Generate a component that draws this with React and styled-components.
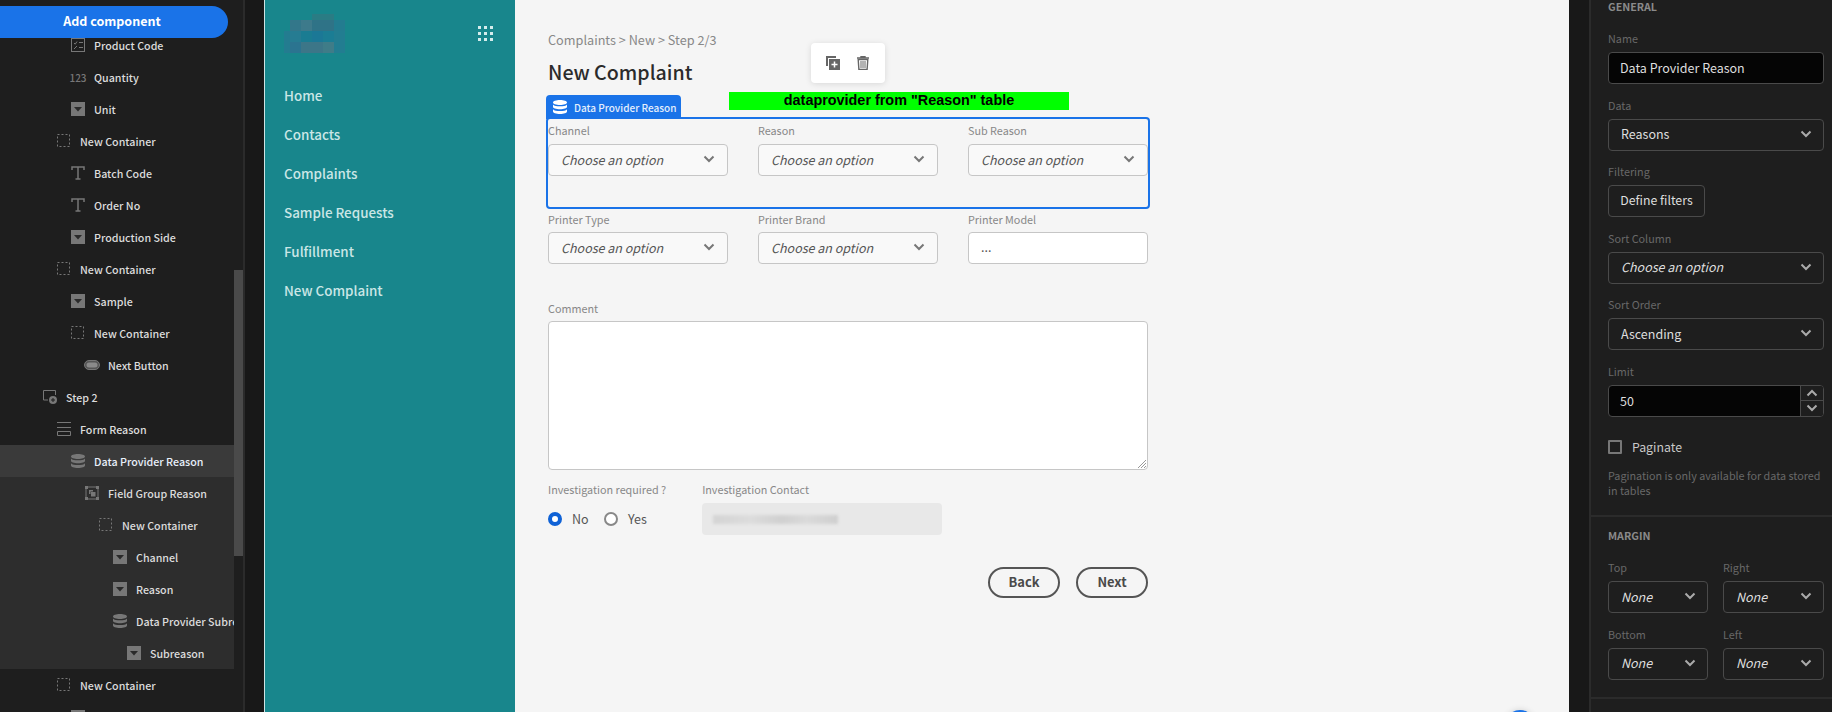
import styled, { createGlobalStyle } from "styled-components";

const FONT = `"Noto Sans CJK SC", "Noto Sans", sans-serif`;

const tree = [
  { name: "Product Code", level: 2, icon: "options" },
  { name: "Quantity", level: 2, icon: "number" },
  { name: "Unit", level: 2, icon: "dropdown" },
  { name: "New Container", level: 1, icon: "container" },
  { name: "Batch Code", level: 2, icon: "text" },
  { name: "Order No", level: 2, icon: "text" },
  { name: "Production Side", level: 2, icon: "dropdown" },
  { name: "New Container", level: 1, icon: "container" },
  { name: "Sample", level: 2, icon: "dropdown" },
  { name: "New Container", level: 2, icon: "container" },
  { name: "Next Button", level: 3, icon: "button" },
  { name: "Step 2", level: 0, icon: "step" },
  { name: "Form Reason", level: 1, icon: "form" },
  { name: "Data Provider Reason", level: 2, icon: "data", state: "selected" },
  { name: "Field Group Reason", level: 3, icon: "group", state: "child" },
  { name: "New Container", level: 4, icon: "container", state: "child" },
  { name: "Channel", level: 5, icon: "dropdown", state: "child" },
  { name: "Reason", level: 5, icon: "dropdown", state: "child" },
  { name: "Data Provider Subreason", level: 5, icon: "data", state: "child" },
  { name: "Subreason", level: 6, icon: "dropdown", state: "child" },
  { name: "New Container", level: 1, icon: "container" },
  { name: "Sample", level: 2, icon: "dropdown" },
];

const navItems = ["Home", "Contacts", "Complaints", "Sample Requests", "Fulfillment", "New Complaint"];

const DB_PATH =
  "M0 2.500C0 1 3 0 7 0s7 1 7 2.500S11 5 7 5 0 4 0 2.500zM0 4.500C1 6 4 6.300 7 6.300s6-.3 7-1.800V7c0 1.200-3 2.200-7 2.200S0 8.200 0 7zM0 9.200c1 1.500 4 1.800 7 1.800s6-.3 7-1.800v2.300C14 13 11 14 7 14s-7-1-7-2.500z";

// blurred logo blocks from the reference: x, y, w, h, colour
const logoBlocks = [
  [28, 0, 22, 6, "#2a7c84"],
  [6, 6, 11, 11, "#33778a"],
  [17, 6, 11, 11, "#3d7a8b"],
  [28, 6, 22, 11, "#2f7387"],
  [50, 6, 11, 11, "#237c90"],
  [0, 17, 6, 11, "#237c90"],
  [6, 17, 11, 11, "#267c92"],
  [17, 17, 11, 11, "#1a7c92"],
  [28, 17, 11, 11, "#1b7896"],
  [39, 17, 11, 11, "#1b7d94"],
  [50, 17, 11, 11, "#227d91"],
  [0, 28, 6, 11, "#237c90"],
  [6, 28, 11, 11, "#2b7490"],
  [17, 28, 22, 11, "#3c7688"],
  [39, 28, 11, 11, "#3f7c88"],
  [50, 28, 11, 11, "#227d91"],
];

function TreeIcon({ kind }) {
  const c = "#777";
  if (kind === "number") return <NumberGlyph>123</NumberGlyph>;
  if (kind === "button") {
    return (
      <svg width="16" height="10" viewBox="0 0 16 10" fill="none" style={{ flexShrink: 0 }}>
        <rect x=".5" y=".5" width="15" height="9" rx="4.500" fill="#555" stroke="#777" />
        <rect x="2.500" y="2.500" width="11" height="5" rx="2.500" fill="#8a8a8a" />
      </svg>
    );
  }
  return (
    <svg width="14" height="14" viewBox="0 0 14 14" fill="none">
      {kind === "dropdown" && (
        <>
          <rect width="14" height="14" fill={c} />
          <path d="M3 5h8l-4 4.500z" fill="#2a2a2a" />
        </>
      )}
      {kind === "container" && (
        <rect x=".5" y=".5" width="12" height="12" stroke={c} strokeDasharray="2 2" />
      )}
      {kind === "text" && (
        <path d="M1 4V1h12v3M7 1v12M4.500 13h5" stroke={c} strokeWidth="1.500" />
      )}
      {kind === "options" && (
        <>
          <rect x=".5" y=".5" width="13" height="13" stroke={c} />
          <path d="M3 5l1.200 1.200L6 3.500M3 11l3-3M8 4.500h4M8 9.500h4" stroke={c} />
        </>
      )}
      {kind === "form" && (
        <path d="M0 .5h14M0 5.500h14M.5 9.500h13v4H.5z" stroke={c} />
      )}
      {kind === "data" && <path d={DB_PATH} fill={c} />}
      {kind === "group" && (
        <>
          <rect x="1" y="1" width="12" height="12" stroke={c} />
          <path d="M0 0h3v3H0zM11 0h3v3h-3zM0 11h3v3H0zM11 11h3v3h-3z" fill={c} />
          <path d="M4 4h4v1.500H5.500V8H4z" fill={c} />
          <rect x="6" y="6" width="4.500" height="4.500" fill={c} />
        </>
      )}
      {kind === "step" && (
        <>
          <path d="M5 10H.5V.5h12V5" stroke={c} />
          <circle cx="10" cy="10" r="4" fill={c} />
          <path d="M8 10h4M10 8v4" stroke="#1e1e1e" />
        </>
      )}
    </svg>
  );
}

function Chevron({ color = "#777", up }) {
  return (
    <svg width="12" height="8" viewBox="0 0 12 8" fill="none">
      <path d={up ? "M1.500 6.500L6 2l4.500 4.500" : "M1.500 1.500L6 6l4.500-4.500"} stroke={color} strokeWidth="2" />
    </svg>
  );
}

function FormSelect() {
  return (
    <LightSelect>
      <span>Choose an option</span>
      <Chevron />
    </LightSelect>
  );
}

function DarkDropdown({ children, italic }) {
  return (
    <DarkSelect $italic={italic}>
      <span>{children}</span>
      <Chevron color="#aaa" />
    </DarkSelect>
  );
}

export default function App() {
  return (
    <>
      <GlobalStyle />
      <Page>
        <TreePanel>
          <AddButton>Add component</AddButton>
          <TreeList>
            {tree.map((row, i) => (
              <TreeRow key={i} $level={row.level} $state={row.state}>
                <IconSlot>
                  <TreeIcon kind={row.icon} />
                </IconSlot>
                <span>{row.name}</span>
              </TreeRow>
            ))}
          </TreeList>
          <ScrollTrack>
            <ScrollThumb />
          </ScrollTrack>
        </TreePanel>
        <Gutter $line />
        <Sidebar>
          <SidebarHead>
            <svg width="61" height="39" viewBox="0 0 61 39">
              {logoBlocks.map(([x, y, w, h, fill], i) => (
                <rect key={i} x={x} y={y} width={w} height={h} fill={fill} />
              ))}
            </svg>
            <svg width="15" height="15" viewBox="0 0 15 15" fill="#d5ecec">
              {[0, 6, 12].flatMap((y) =>
                [0, 6, 12].map((x) => <rect key={`${x}-${y}`} x={x} y={y} width="3" height="3" />)
              )}
            </svg>
          </SidebarHead>
          <Nav>
            {navItems.map((item) => (
              <NavItem key={item}>{item}</NavItem>
            ))}
          </Nav>
        </Sidebar>
        <Main>
          <Breadcrumb>Complaints &gt; New &gt; Step 2/3</Breadcrumb>
          <TitleRow>
            <Title>New Complaint</Title>
            <Toolbar>
              <svg width="14" height="14" viewBox="0 0 14 14">
                <path d="M0 0h10v2H2v8H0z" fill="#666" />
                <path d="M3 3h11v11H3z" fill="#666" />
                <path d="M5.500 8.500h6M8.500 5.500v6" stroke="#fff" strokeWidth="1.500" />
              </svg>
              <svg width="12" height="14" viewBox="0 0 12 14" fill="none" stroke="#666">
                <path d="M0 2h12M4 2V.6h4V2" strokeWidth="1.400" />
                <path d="M1.200 3.500l.7 10h8.200l.7-10z" strokeWidth="1.400" />
                <path d="M4 5v7M6 5v7M8 5v7" strokeWidth="1" />
              </svg>
            </Toolbar>
            <Annotation>dataprovider from "Reason" table</Annotation>
          </TitleRow>
          <ProviderBox>
            <ProviderTag>
              <svg width="14" height="14" viewBox="0 0 14 14" fill="#fff" style={{ flexShrink: 0 }}>
                <path d={DB_PATH} />
              </svg>
              Data Provider Reason
            </ProviderTag>
            <FieldGrid>
              <Field>
                <FieldLabel>Channel</FieldLabel>
                <FormSelect />
              </Field>
              <Field>
                <FieldLabel>Reason</FieldLabel>
                <FormSelect />
              </Field>
              <Field>
                <FieldLabel>Sub Reason</FieldLabel>
                <FormSelect />
              </Field>
            </FieldGrid>
          </ProviderBox>
          <FieldGrid>
            <Field>
              <FieldLabel $tight>Printer Type</FieldLabel>
              <FormSelect />
            </Field>
            <Field>
              <FieldLabel $tight>Printer Brand</FieldLabel>
              <FormSelect />
            </Field>
            <Field>
              <FieldLabel $tight>Printer Model</FieldLabel>
              <TextInput>...</TextInput>
            </Field>
          </FieldGrid>
          <CommentField>
            <FieldLabel $low>Comment</FieldLabel>
            <TextArea>
              <ResizeHandle width="9" height="9" viewBox="0 0 9 9">
                <path d="M1 9l8-8M4 9l5-5M7 9l2-2" stroke="#999" />
              </ResizeHandle>
            </TextArea>
          </CommentField>
          <InvestigationRow>
            <RadioColumn>
              <FieldLabel>Investigation required ?</FieldLabel>
              <RadioRow>
                <Radio $checked />
                <RadioLabel>No</RadioLabel>
                <Radio />
                <RadioLabel>Yes</RadioLabel>
              </RadioRow>
            </RadioColumn>
            <div>
              <FieldLabel>Investigation Contact</FieldLabel>
              <DisabledInput>
                <BlurredText />
              </DisabledInput>
            </div>
          </InvestigationRow>
          <Actions>
            <OutlineButton>Back</OutlineButton>
            <OutlineButton>Next</OutlineButton>
          </Actions>
          <FloatingButton />
        </Main>
        <Gutter />
        <Settings>
          <Section $height={517}>
            <SectionTitle>GENERAL</SectionTitle>
            <DarkLabel>Name</DarkLabel>
            <DarkInput>Data Provider Reason</DarkInput>
            <DarkLabel>Data</DarkLabel>
            <DarkDropdown>Reasons</DarkDropdown>
            <DarkLabel>Filtering</DarkLabel>
            <FilterButton>Define filters</FilterButton>
            <DarkLabel>Sort Column</DarkLabel>
            <DarkDropdown italic>Choose an option</DarkDropdown>
            <DarkLabel>Sort Order</DarkLabel>
            <DarkDropdown>Ascending</DarkDropdown>
            <DarkLabel>Limit</DarkLabel>
            <NumberInput>
              <span>50</span>
              <Spinner>
                <SpinButton>
                  <Chevron color="#aaa" up />
                </SpinButton>
                <SpinButton>
                  <Chevron color="#aaa" />
                </SpinButton>
              </Spinner>
            </NumberInput>
            <CheckRow>
              <CheckBox />
              Paginate
            </CheckRow>
            <Hint>Pagination is only available for data stored in tables</Hint>
          </Section>
          <Section $height={182}>
            <SectionTitle $spaced>MARGIN</SectionTitle>
            <MarginGrid>
              {["Top", "Right", "Bottom", "Left"].map((side) => (
                <div key={side}>
                  <DarkLabel>{side}</DarkLabel>
                  <DarkDropdown italic>None</DarkDropdown>
                </div>
              ))}
            </MarginGrid>
          </Section>
        </Settings>
      </Page>
    </>
  );
}

const GlobalStyle = createGlobalStyle`
  html, body {
    margin: 0;
    height: 712px;
    overflow: hidden;
    background: #1a1a1a;
  }
  * {
    box-sizing: border-box;
  }
`;

const Page = styled.div`
  display: flex;
  width: 1832px;
  height: 712px;
  overflow: hidden;
  font-family: ${FONT};
`;

const TreePanel = styled.div`
  position: relative;
  flex: 0 0 245px;
  height: 712px;
  overflow: hidden;
  background: #1e1e1e;
  border-right: 2px solid #2b2b2b;
`;

const AddButton = styled.div`
  position: absolute;
  z-index: 2;
  top: 6px;
  left: -20px;
  width: 248px;
  height: 32px;
  border-radius: 16px;
  background: #1a73e8;
  color: #fff;
  font-size: 12.5px;
  font-weight: 700;
  line-height: 30px;
  text-align: center;
  padding-left: 16px;
`;

const TreeList = styled.div`
  width: 234px;
  padding-top: 29px;
`;

const TreeRow = styled.div`
  display: flex;
  align-items: center;
  height: 32px;
  padding-left: ${(p) => 43 + p.$level * 14}px;
  white-space: nowrap;
  overflow: hidden;
  font-size: 10.7px;
  font-weight: 500;
  color: ${(p) => (p.$state === "selected" ? "#e8f0fa" : "#dcdcdc")};
  background: ${(p) =>
    p.$state === "selected" ? "#3a3a3a" : p.$state === "child" ? "#2d2d2d" : "transparent"};
`;

const IconSlot = styled.span`
  display: flex;
  flex: 0 0 14px;
  align-items: center;
  justify-content: center;
  width: 14px;
  height: 14px;
  margin-right: 9px;
`;

const NumberGlyph = styled.span`
  font-size: 10px;
  color: #777;
`;

const ScrollTrack = styled.div`
  position: absolute;
  top: 0;
  right: 0;
  width: 9px;
  height: 712px;
`;

const ScrollThumb = styled.div`
  margin-top: 270px;
  height: 286px;
  background: #4a4a4a;
`;

const Gutter = styled.div`
  flex: 0 0 20px;
  background: #181818;
  border-right: ${(p) => (p.$line ? "1px solid #cfe3e3" : "0")};
`;

const Sidebar = styled.div`
  flex: 0 0 250px;
  background: #18868c;
`;

const SidebarHead = styled.div`
  display: flex;
  align-items: center;
  justify-content: space-between;
  height: 39px;
  margin: 14px 22px 0 19px;
`;

const Nav = styled.nav`
  display: flex;
  flex-direction: column;
  margin-top: 23px;
  padding-left: 19px;
`;

const NavItem = styled.a`
  height: 39px;
  line-height: 38px;
  font-size: 13.4px;
  font-weight: 500;
  color: #cbe6e6;
`;

const Main = styled.main`
  position: relative;
  flex: 0 0 1054px;
  height: 712px;
  padding: 30px 0 0 33px;
  background: #f5f5f5;
`;

const Breadcrumb = styled.div`
  height: 20px;
  line-height: 20px;
  font-size: 12.7px;
  color: #888;
`;

const TitleRow = styled.div`
  position: relative;
  height: 45px;
  padding-top: 8px;
`;

const Title = styled.h1`
  margin: 0;
  font-size: 19.6px;
  font-weight: 500;
  line-height: 28px;
  color: #2b2b2b;
`;

const Toolbar = styled.div`
  position: absolute;
  z-index: 3;
  top: -7px;
  left: 263px;
  display: flex;
  align-items: center;
  gap: 17px;
  justify-content: center;
  width: 74px;
  height: 40px;
  padding-right: 2px;
  border-radius: 4px;
  background: #fff;
  box-shadow: 0 1px 6px rgba(0, 0, 0, 0.12);
`;

const Annotation = styled.div`
  position: absolute;
  top: 42px;
  left: 181px;
  width: 340px;
  height: 18px;
  background: #00ff00;
  color: #000;
  font-family: "Liberation Sans", sans-serif;
  font-size: 14.4px;
  font-weight: 700;
  line-height: 16px;
  text-align: center;
`;

const ProviderBox = styled.div`
  position: relative;
  width: 604px;
  height: 92px;
  margin: 22px 0 0 -2px;
  border: 2px solid #1a73e8;
  border-radius: 4px;
`;

const ProviderTag = styled.div`
  position: absolute;
  top: -24px;
  left: -2px;
  display: flex;
  align-items: center;
  gap: 7px;
  width: 135px;
  height: 24px;
  padding-left: 7px;
  border-radius: 4px 4px 0 0;
  background: #1a73e8;
  color: #e4eefc;
  font-size: 10px;
  font-weight: 500;
  white-space: nowrap;
`;

const FieldGrid = styled.div`
  display: grid;
  grid-template-columns: repeat(3, 180px);
  column-gap: 30px;
`;

const Field = styled.div`
  display: flex;
  flex-direction: column;
`;

const FieldLabel = styled.div`
  height: ${(p) => (p.$tight ? "23px" : "25px")};
  padding-top: ${(p) => (p.$tight ? "1px" : p.$low ? "3px" : "2px")};
  font-size: 10.8px;
  line-height: 18px;
  white-space: nowrap;
  color: #888;
`;

const LightSelect = styled.div`
  display: flex;
  align-items: center;
  justify-content: space-between;
  height: 32px;
  padding: 0 12px 2px 12px;
  border: 1px solid #c6c6c6;
  border-radius: 4px;
  background: #f9f9f9;
  font-size: 12.5px;
  font-style: italic;
  color: #555;
`;

const TextInput = styled.div`
  height: 32px;
  padding-left: 12px;
  border: 1px solid #c6c6c6;
  border-radius: 4px;
  background: #fff;
  font-size: 12.5px;
  line-height: 28px;
  color: #555;
`;

const CommentField = styled.div`
  width: 600px;
  margin-top: 32px;
`;

const TextArea = styled.div`
  position: relative;
  height: 149px;
  border: 1px solid #c6c6c6;
  border-radius: 4px;
  background: #fff;
`;

const ResizeHandle = styled.svg`
  position: absolute;
  right: 1px;
  bottom: 1px;
`;

const InvestigationRow = styled.div`
  display: flex;
  gap: 36px;
  width: 600px;
  margin-top: 8px;
`;

const RadioColumn = styled.div`
  flex: 0 0 117px;
`;

const RadioRow = styled.div`
  display: flex;
  align-items: center;
  width: 117px;
  height: 32px;
`;

const Radio = styled.span`
  flex: 0 0 14px;
  width: 14px;
  height: 14px;
  border-radius: 50%;
  border: ${(p) => (p.$checked ? "4.5px solid #0f62d6" : "2px solid #888")};
  background: #fff;
`;

const RadioLabel = styled.span`
  width: 42px;
  padding: 0 0 1px 10px;
  font-size: 12.5px;
  color: #555;
`;

const DisabledInput = styled.div`
  display: flex;
  align-items: center;
  width: 240px;
  height: 32px;
  padding-left: 11px;
  border-radius: 4px;
  background: #e8e8e8;
`;

const BlurredText = styled.div`
  width: 125px;
  height: 9px;
  background: linear-gradient(90deg, #d4d4d4, #dcdcdc 30%, #d0d0d0 55%, #dadada 75%, #cfcfcf);
  filter: blur(1.5px);
`;

const Actions = styled.div`
  display: flex;
  justify-content: flex-end;
  gap: 16px;
  width: 600px;
  margin-top: 32px;
`;

const OutlineButton = styled.div`
  width: 72px;
  height: 31px;
  border: 2px solid #555;
  border-radius: 16px;
  font-size: 12.9px;
  font-weight: 700;
  line-height: 26px;
  text-align: center;
  color: #4a4a4a;
`;

const FloatingButton = styled.div`
  position: absolute;
  left: 990px;
  top: 710px;
  width: 30px;
  height: 30px;
  border-radius: 50%;
  background: #1a73e8;
  box-shadow: 0 0 6px rgba(0, 0, 0, 0.15);
`;

const Settings = styled.aside`
  flex: 1;
  height: 712px;
  overflow: hidden;
  background: #1e1e1e;
  border-left: 2px solid #2b2b2b;
`;

const Section = styled.section`
  height: ${(p) => p.$height}px;
  padding: 0 8px 0 17px;
  border-bottom: 2px solid #2b2b2b;
`;

const SectionTitle = styled.div`
  height: ${(p) => (p.$spaced ? "29.5px" : "17.5px")};
  padding-top: ${(p) => (p.$spaced ? "12px" : "0")};
  font-size: 10.7px;
  font-weight: 700;
  line-height: 14px;
  color: #8a8a8a;
`;

const DarkLabel = styled.div`
  height: 34.5px;
  padding-top: 11.5px;
  font-size: 10.8px;
  line-height: 18px;
  color: #686868;
`;

const DarkSelect = styled.div`
  display: flex;
  align-items: center;
  justify-content: space-between;
  height: 32px;
  padding: 0 11px 2px 12px;
  border: 1px solid #4a4a4a;
  border-radius: 4px;
  background: #1e1e1e;
  font-size: 12.5px;
  font-style: ${(p) => (p.$italic ? "italic" : "normal")};
  color: #dedede;
`;

const DarkInput = styled.div`
  height: 32px;
  padding-left: 11px;
  border: 1px solid #4a4a4a;
  border-radius: 4px;
  background: #050505;
  font-size: 12.5px;
  line-height: 29px;
  color: #dedede;
`;

const FilterButton = styled.div`
  width: 97px;
  height: 32px;
  border: 1px solid #4a4a4a;
  border-radius: 4px;
  font-size: 12.3px;
  line-height: 29px;
  text-align: center;
  color: #dedede;
`;

const NumberInput = styled(DarkInput)`
  display: flex;
  justify-content: space-between;
  padding-right: 0;
  overflow: hidden;
`;

const Spinner = styled.div`
  display: flex;
  flex-direction: column;
  width: 23px;
  border-left: 1px solid #4a4a4a;
  background: #1e1e1e;
`;

const SpinButton = styled.div`
  display: flex;
  flex: 1;
  align-items: center;
  justify-content: center;
  &:first-child {
    border-bottom: 1px solid #4a4a4a;
  }
`;

const CheckRow = styled.div`
  display: flex;
  align-items: center;
  gap: 10px;
  height: 14px;
  margin-top: 23px;
  font-size: 12.3px;
  color: #c8c8c8;
`;

const CheckBox = styled.span`
  width: 14px;
  height: 14px;
  border: 2px solid #777;
  border-radius: 1px;
`;

const Hint = styled.p`
  margin: 14.5px 0 0;
  font-size: 10.8px;
  line-height: 15px;
  color: #686868;
`;

const MarginGrid = styled.div`
  display: grid;
  grid-template-columns: 100px 101px;
  column-gap: 15px;
`;
